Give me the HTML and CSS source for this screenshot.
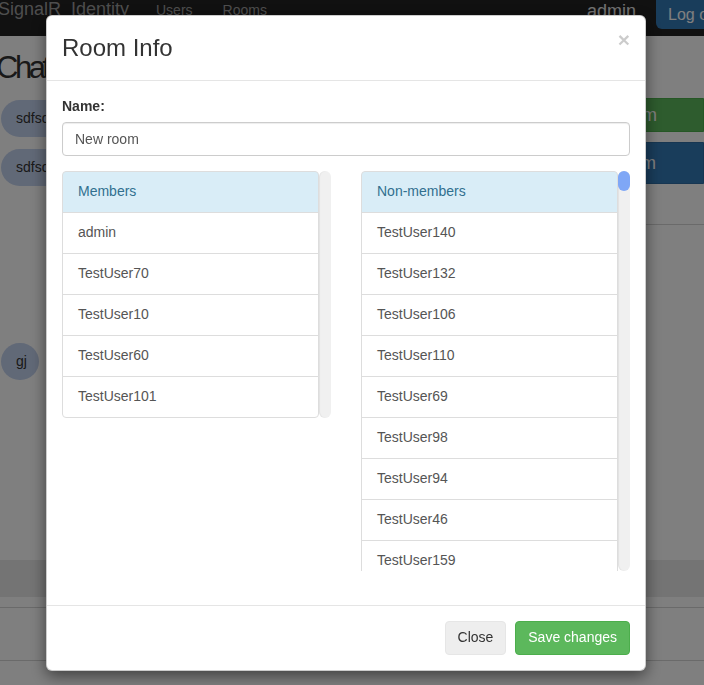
FILE: index.html
```html
<!DOCTYPE html>
<html lang="en">
<head>
  <meta charset="UTF-8" />
  <meta name="viewport" content="width=device-width, initial-scale=1.0"/>
  <title>Chat - SignalR_Identity</title>
  <link rel="stylesheet" href="styles.css">
</head>
<body>
  <!-- page behind the dialog -->
  <nav class="navbar">
    <a class="brand" href="#">SignalR_Identity</a>
    <a class="nav-link" href="#">Users</a>
    <a class="nav-link" href="#">Rooms</a>
    <span class="nav-user">admin</span>
    <button class="btn-logoff">Log off</button>
  </nav>

  <div class="chat">
    <div class="chat-main">
      <h1>Chat</h1>
      <div class="bubble">sdfsdf</div>
      <div class="bubble">sdfsdf</div>
      <div class="bubble bubble-late">gj</div>
    </div>
    <div class="chat-side">
      <button class="side-btn side-btn-create">Create room</button>
      <button class="side-btn side-btn-delete">Delete room</button>
      <div class="side-rule"></div>
    </div>
  </div>
  <div class="chat-compose"></div>
  <div class="page-footer"></div>

  <div class="backdrop"></div>

  <!-- Room Info dialog -->
  <div class="modal">
    <div class="modal-dialog">
      <div class="modal-content">
        <div class="modal-header">
          <button class="close">&times;</button>
          <h4 class="modal-title">Room Info</h4>
        </div>

        <div class="modal-body">
          <div class="form-group">
            <label for="room-name">Name:</label>
            <input id="room-name" class="form-control" type="text" value="New room" />
          </div>

          <div class="user-columns">
            <div class="user-col">
              <div class="user-scroll">
                <ul class="list-group">
                  <li class="list-group-item list-group-item-info">Members</li>
                  <li class="list-group-item">admin</li>
                  <li class="list-group-item">TestUser70</li>
                  <li class="list-group-item">TestUser10</li>
                  <li class="list-group-item">TestUser60</li>
                  <li class="list-group-item">TestUser101</li>
                </ul>
              </div>
              <div class="scroll-track"></div>
            </div>

            <div class="user-col">
              <div class="user-scroll">
                <ul class="list-group">
                  <li class="list-group-item list-group-item-info">Non-members</li>
                  <li class="list-group-item">TestUser140</li>
                  <li class="list-group-item">TestUser132</li>
                  <li class="list-group-item">TestUser106</li>
                  <li class="list-group-item">TestUser110</li>
                  <li class="list-group-item">TestUser69</li>
                  <li class="list-group-item">TestUser98</li>
                  <li class="list-group-item">TestUser94</li>
                  <li class="list-group-item">TestUser46</li>
                  <li class="list-group-item">TestUser159</li>
                  <li class="list-group-item">TestUser23</li>
                </ul>
              </div>
              <div class="scroll-track"><div class="scroll-thumb"></div></div>
            </div>
          </div>
        </div>

        <div class="modal-footer">
          <button class="btn btn-default">Close</button>
          <button class="btn btn-success">Save changes</button>
        </div>
      </div>
    </div>
  </div>
</body>
</html>
```

FILE: styles.css
```css
* {
  box-sizing: border-box;
}

body {
  margin: 0;
  height: 685px;
  overflow: hidden;
  font-family: "Liberation Sans", Arial, sans-serif;
  font-size: 14px;
  line-height: 1.42857;
  color: #333;
  background: #fff;
}

button {
  font-family: inherit;
  cursor: pointer;
}

/* navbar */
.navbar {
  display: flex;
  align-items: flex-start;
  height: 36px;
  background: #222;
  overflow: hidden;
}

.brand {
  width: 143px;
  margin: -1px 0 0 -2px;
  font-size: 18px;
  line-height: 20px;
  color: #9d9d9d;
  text-decoration: none;
}

.nav-link {
  padding: 0 15px;
  line-height: 20px;
  color: #9d9d9d;
  text-decoration: none;
}

.nav-user {
  margin-left: auto;
  margin-right: 20px;
  margin-top: 1px;
  font-size: 18px;
  line-height: 20px;
  color: #e6e6e6;
}

.btn-logoff {
  flex-shrink: 0;
  width: 81px;
  height: 29px;
  margin-right: -33px;
  padding: 0 12px;
  text-align: left;
  font-size: 16px;
  color: #fff;
  background: #337ab7;
  border: none;
  border-radius: 0 0 0 6px;
}

/* chat page */
.chat {
  display: flex;
  height: 524px;
}

.chat-main {
  flex: 1;
}

.chat-main h1 {
  margin: 15px 0 15px -4px;
  font-size: 31px;
  font-weight: 500;
  line-height: 1.1;
  letter-spacing: -3.5px;
}

.bubble {
  display: table;
  margin: 0 0 12px 1px;
  padding: 8px 16px 8px 15px;
  line-height: 21px;
  background: #c3d2ee;
  border-radius: 19px;
}

.bubble-late {
  margin-top: 157px;
  padding: 8px 12px 8px 15px;
}

.chat-side {
  width: 194px;
  padding-top: 62px;
}

.side-btn {
  display: block;
  width: 100%;
  font-size: 18px;
  color: #fff;
  border: 1px solid transparent;
  border-radius: 4px 0 0 4px;
}

.side-btn-create {
  height: 34px;
  background: #5cb85c;
  border-color: #4cae4c;
}

.side-btn-delete {
  height: 42px;
  margin-top: 10px;
  background: #337ab7;
  border-color: #2e6da4;
}

.side-rule {
  margin-top: 40px;
  border-top: 1px solid #d4d4d4;
}

.chat-compose {
  height: 37px;
  background: #e8e8e8;
}

.page-footer {
  height: 54px;
  margin-top: 10px;
  border-top: 1px solid #d4d4d4;
  border-bottom: 1px solid #d4d4d4;
}

/* dialog */
.backdrop {
  position: fixed;
  top: 0;
  right: 0;
  bottom: 0;
  left: 0;
  background: #000;
  opacity: 0.5;
}

.modal {
  position: fixed;
  top: 0;
  right: 0;
  bottom: 0;
  left: 0;
}

.modal-dialog {
  width: 600px;
  margin: 15px 0 0 46px;
}

.modal-content {
  background: #fff;
  border: 1px solid rgba(0, 0, 0, 0.2);
  border-radius: 6px;
  box-shadow: 0 5px 15px rgba(0, 0, 0, 0.5);
}

.modal-header {
  padding: 15px;
  border-bottom: 1px solid #e5e5e5;
}

.modal-title {
  margin: 0;
  font-size: 24px;
  font-weight: 500;
  line-height: 1.42857;
}

.close {
  float: right;
  margin-top: -2px;
  padding: 0;
  font-size: 21px;
  font-weight: bold;
  line-height: 1;
  color: #000;
  opacity: 0.2;
  background: transparent;
  border: 0;
}

.modal-body {
  padding: 16px 15px 14px;
}

.form-group {
  margin-bottom: 15px;
}

.form-group label {
  display: block;
  margin-bottom: 5px;
  font-weight: bold;
}

.form-control {
  display: block;
  width: 100%;
  height: 34px;
  padding: 6px 12px;
  font-family: inherit;
  font-size: 14px;
  color: #555;
  border: 1px solid #ccc;
  border-radius: 4px;
  box-shadow: inset 0 1px 1px rgba(0, 0, 0, 0.075);
}

.user-columns {
  display: grid;
  grid-template-columns: 1fr 1fr;
  gap: 30px;
  align-items: start;
}

/* list plus its scrollbar, drawn by hand */
.user-col {
  display: flex;
  margin-bottom: 20px;
}

.user-scroll {
  flex: 1;
  max-height: 400px;
  overflow: hidden;
}

.scroll-track {
  width: 12px;
  flex-shrink: 0;
  background: #f0f0f0;
  border-radius: 6px;
  box-shadow: inset 1px 0 1px rgba(0, 0, 0, 0.06);
}

.scroll-thumb {
  height: 20px;
  background: #7fa7f6;
  border-radius: 6px;
}

.list-group {
  margin: 0;
  padding: 0;
  list-style: none;
}

.list-group-item {
  padding: 10px 15px;
  margin-bottom: -1px;
  color: #555;
  background: #fff;
  border: 1px solid #ddd;
}

.list-group-item:first-child {
  border-radius: 4px 4px 0 0;
}

.list-group-item:last-child {
  margin-bottom: 0;
  border-radius: 0 0 4px 4px;
}

.list-group-item-info {
  color: #31708f;
  background: #d9edf7;
}

.modal-footer {
  padding: 15px;
  text-align: right;
  border-top: 1px solid #e5e5e5;
}

.btn {
  display: inline-block;
  padding: 6px 12px;
  font-size: 14px;
  line-height: 1.42857;
  border: 1px solid transparent;
  border-radius: 4px;
}

.btn + .btn {
  margin-left: 5px;
}

.btn-default {
  color: #333;
  background: #eee;
  border-color: #e6e6e6;
}

.btn-success {
  color: #fff;
  background: #5cb85c;
  border-color: #4cae4c;
}
```
